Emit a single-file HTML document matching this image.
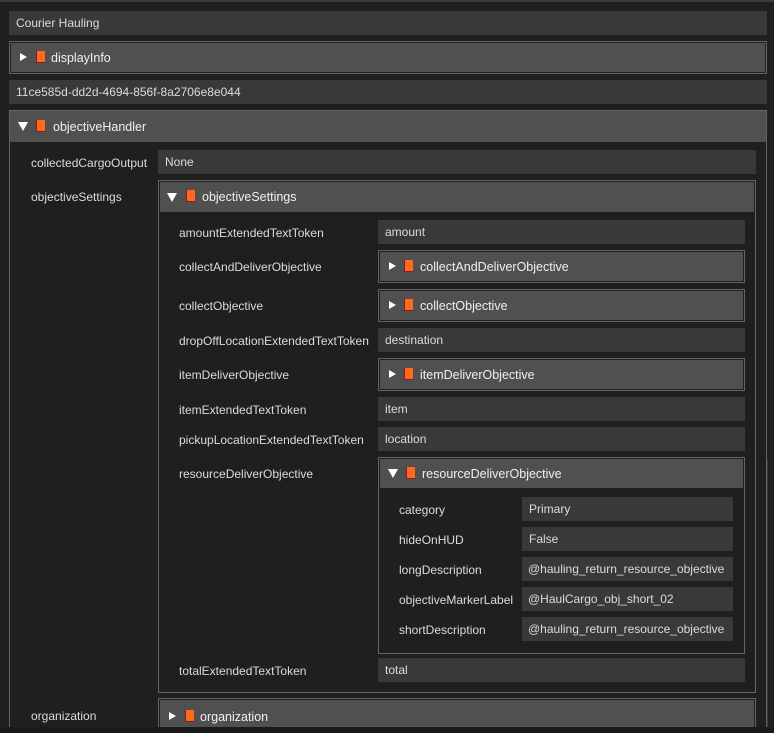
<!DOCTYPE html>
<html><head><style>
*{margin:0;padding:0;box-sizing:border-box}
html,body{width:774px;height:733px;overflow:hidden}
body{background:#1f1f1f;position:relative;font-family:"Segoe UI","Liberation Sans",sans-serif;font-size:12px;color:#dcdcdc}
.a{position:absolute}
.f{position:absolute;background:#393939;padding-left:7px;line-height:25px;height:24px;white-space:nowrap}
.l{position:absolute;white-space:nowrap;line-height:16px}
.b{position:absolute;border:1px solid #646464;background:#1f1f1f}
.h{position:absolute;border:1px solid #646464;background:#1f1f1f}
.h>div{position:absolute;left:1px;top:1px;right:1px;bottom:1px;background:#505050}
.tr{position:absolute;width:0;height:0;border-top:4px solid transparent;border-bottom:4px solid transparent;border-left:7px solid #fff}
.td{position:absolute;width:0;height:0;border-left:5.5px solid transparent;border-right:5.5px solid transparent;border-top:9px solid #fff}
.ic{position:absolute;width:9px;height:12px;background:#8a1528}
.ic::after{content:"";position:absolute;left:1px;top:0;width:8px;height:11px;background:#ff6a1a}
.t{position:absolute;white-space:nowrap;color:#f0f0f0;font-size:12.5px}
</style></head><body>
<div class="a" style="left:0;top:0;width:774px;height:2px;background:#3c3c3c"></div>
<div class="a" style="left:767px;top:460px;width:1px;height:273px;background:#3a3a3a"></div>

<div class="f" style="left:9px;top:11px;width:758px">Courier Hauling</div>

<div class="h" style="left:9px;top:41px;width:758px;height:33px"><div></div></div>
<div class="tr" style="left:20px;top:53px"></div><div class="ic" style="left:36px;top:51px"></div>
<div class="t" style="left:51px;top:51px">displayInfo</div>

<div class="f" style="left:9px;top:80px;width:758px">11ce585d-dd2d-4694-856f-8a2706e8e044</div>

<div class="b" style="left:9px;top:110px;width:758px;height:617px;border-bottom:none"></div>
<div class="a" style="left:10px;top:111px;width:756px;height:31px;background:#505050"></div>
<div class="td" style="left:18px;top:122px"></div><div class="ic" style="left:36px;top:120px"></div>
<div class="t" style="left:53px;top:120px">objectiveHandler</div>

<div class="l" style="left:31px;top:155px">collectedCargoOutput</div>
<div class="f" style="left:158px;top:150px;width:598px">None</div>

<div class="l" style="left:31px;top:189px">objectiveSettings</div>
<div class="b" style="left:158px;top:180px;width:598px;height:513px"></div>
<div class="a" style="left:160px;top:182px;width:594px;height:30px;background:#505050"></div>
<div class="td" style="left:167px;top:193px"></div><div class="ic" style="left:186px;top:190px"></div>
<div class="t" style="left:202px;top:190px">objectiveSettings</div>

<div class="l" style="left:179px;top:225px">amountExtendedTextToken</div>
<div class="f" style="left:378px;top:220px;width:367px">amount</div>

<div class="l" style="left:179px;top:259px">collectAndDeliverObjective</div>
<div class="h" style="left:378px;top:250px;width:367px;height:33px"><div></div></div>
<div class="tr" style="left:389px;top:262px"></div><div class="ic" style="left:404px;top:260px"></div>
<div class="t" style="left:420px;top:260px">collectAndDeliverObjective</div>

<div class="l" style="left:179px;top:298px">collectObjective</div>
<div class="h" style="left:378px;top:289px;width:367px;height:33px"><div></div></div>
<div class="tr" style="left:389px;top:301px"></div><div class="ic" style="left:404px;top:299px"></div>
<div class="t" style="left:420px;top:299px">collectObjective</div>

<div class="l" style="left:179px;top:333px">dropOffLocationExtendedTextToken</div>
<div class="f" style="left:378px;top:328px;width:367px">destination</div>

<div class="l" style="left:179px;top:367px">itemDeliverObjective</div>
<div class="h" style="left:378px;top:358px;width:367px;height:33px"><div></div></div>
<div class="tr" style="left:389px;top:370px"></div><div class="ic" style="left:404px;top:368px"></div>
<div class="t" style="left:420px;top:368px">itemDeliverObjective</div>

<div class="l" style="left:179px;top:402px">itemExtendedTextToken</div>
<div class="f" style="left:378px;top:397px;width:367px">item</div>

<div class="l" style="left:179px;top:432px">pickupLocationExtendedTextToken</div>
<div class="f" style="left:378px;top:427px;width:367px">location</div>

<div class="l" style="left:179px;top:466px">resourceDeliverObjective</div>
<div class="b" style="left:378px;top:457px;width:367px;height:197px"></div>
<div class="a" style="left:380px;top:459px;width:363px;height:29px;background:#505050"></div>
<div class="td" style="left:388px;top:469px"></div><div class="ic" style="left:406px;top:467px"></div>
<div class="t" style="left:422px;top:467px">resourceDeliverObjective</div>

<div class="l" style="left:399px;top:502px">category</div>
<div class="f" style="left:522px;top:497px;width:211px">Primary</div>
<div class="l" style="left:399px;top:532px">hideOnHUD</div>
<div class="f" style="left:522px;top:527px;width:211px">False</div>
<div class="l" style="left:399px;top:562px">longDescription</div>
<div class="f" style="left:522px;top:557px;width:211px;padding-left:6px">@hauling_return_resource_objective</div>
<div class="l" style="left:399px;top:592px">objectiveMarkerLabel</div>
<div class="f" style="left:522px;top:587px;width:211px;padding-left:6px">@HaulCargo_obj_short_02</div>
<div class="l" style="left:399px;top:622px">shortDescription</div>
<div class="f" style="left:522px;top:617px;width:211px;padding-left:6px">@hauling_return_resource_objective</div>

<div class="l" style="left:179px;top:663px">totalExtendedTextToken</div>
<div class="f" style="left:378px;top:658px;width:367px">total</div>

<div class="l" style="left:31px;top:708px">organization</div>
<div class="a" style="left:158px;top:698px;width:598px;height:29px;border:1px solid #646464;border-bottom:none;background:#1f1f1f"></div>
<div class="a" style="left:160px;top:700px;width:594px;height:27px;background:#505050"></div>
<div class="tr" style="left:169px;top:712px"></div><div class="ic" style="left:185px;top:710px"></div>
<div class="t" style="left:200px;top:710px">organization</div>
<div class="a" style="left:0;top:727px;width:774px;height:6px;background:#1a1a1a"></div>
</body></html>
